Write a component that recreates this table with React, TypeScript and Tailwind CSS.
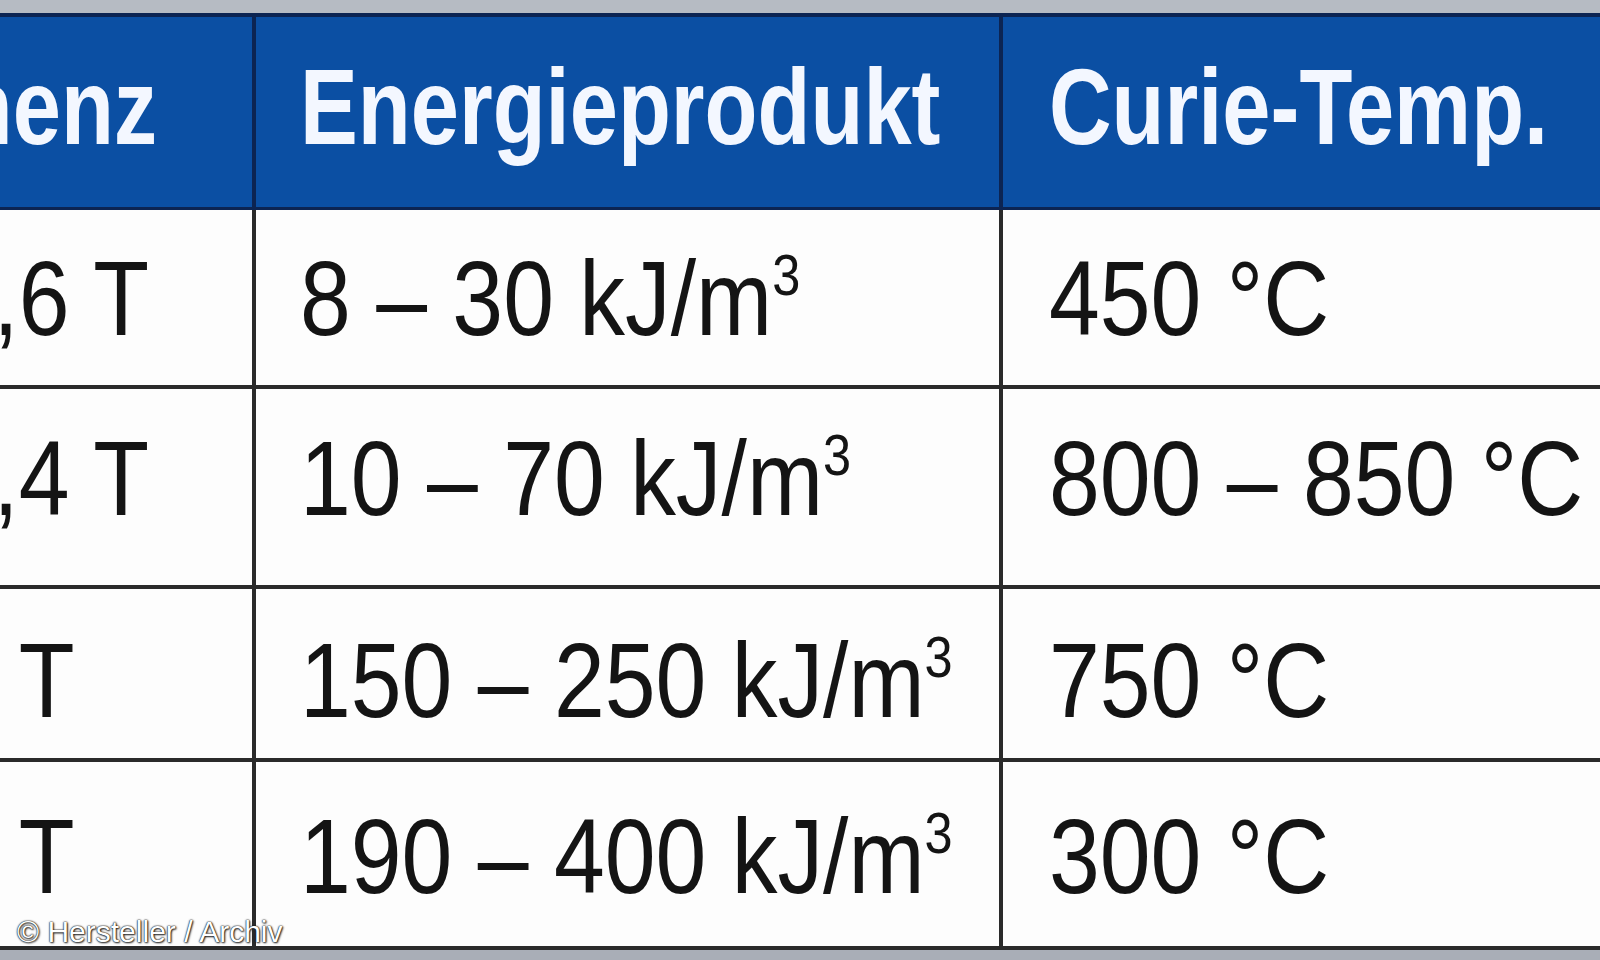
const rows = [
  {
    rem: "0,2 – 0,6 T",
    remPad: "pr-[103px]",
    energy: "8 – 30 kJ/m",
    curie: "450 °C",
    h: "h-[179px]",
    pt: "pt-[36px]",
  },
  {
    rem: "0,6 – 1,4 T",
    remPad: "pr-[103px]",
    energy: "10 – 70 kJ/m",
    curie: "800 – 850 °C",
    h: "h-[200px]",
    pt: "pt-[37px]",
  },
  {
    rem: "0,8 – 1,15 T",
    remPad: "pr-[178px]",
    energy: "150 – 250 kJ/m",
    curie: "750 °C",
    h: "h-[173px]",
    pt: "pt-[39px]",
  },
  {
    rem: "1,0 – 1,45 T",
    remPad: "pr-[178px]",
    energy: "190 – 400 kJ/m",
    curie: "300 °C",
    h: "h-[188px]",
    pt: "pt-[42px]",
  },
];

function Cube() {
  return <span className="inline-block align-top text-[58px] leading-none">3</span>;
}

export default function App() {
  return (
    <div className="relative w-[1600px] h-[960px] overflow-hidden bg-[#a9aeb7] font-['Liberation_Sans',Arial,sans-serif]">
      <div className="h-[13px] bg-[#b6bbc3]" />

      {/* header */}
      <div className="grid grid-cols-[252px_747px_601px] h-[197px] border-t-4 border-b-[3px] border-[#0c2452] bg-[#0b4fa3] text-[#f3f7ff] font-bold text-[107px] leading-none whitespace-nowrap">
        <div className="flex justify-end overflow-hidden pt-[37px] pr-[95px]">
          <span className="inline-block origin-right scale-x-[0.81]">Remanenz</span>
        </div>
        <div className="border-l-4 border-[#0c2452] pt-[37px] pl-[44px]">
          <span className="inline-block origin-left scale-x-[0.81]">Energieprodukt</span>
        </div>
        <div className="border-l-4 border-[#0c2452] pt-[37px] pl-[46px]">
          <span className="inline-block origin-left scale-x-[0.81]">Curie-Temp.</span>
        </div>
      </div>

      {/* body */}
      <div className="bg-[#fdfdfd] text-[#141414] text-[105px] leading-none whitespace-nowrap">
        {rows.map((r) => (
          <div
            key={r.energy}
            className={`grid grid-cols-[252px_747px_601px] border-b-4 border-[#2a2a2a] ${r.h}`}
          >
            <div className={`flex justify-end overflow-hidden ${r.pt} ${r.remPad}`}>
              <span className="inline-block origin-right scale-x-[0.87]">{r.rem}</span>
            </div>
            <div className={`border-l-4 border-[#2a2a2a] pl-[44px] ${r.pt}`}>
              <span className="inline-block origin-left scale-x-[0.87]">
                {r.energy}
                <Cube />
              </span>
            </div>
            <div className={`border-l-4 border-[#2a2a2a] pl-[46px] ${r.pt}`}>
              <span className="inline-block origin-left scale-x-[0.87]">{r.curie}</span>
            </div>
          </div>
        ))}
      </div>

      <div className="absolute left-[17px] top-[917px] text-[30px] leading-none text-white whitespace-nowrap [text-shadow:0_0_1px_#000,0_0_2px_#1a1a1a,1px_1px_2px_#333]">
        © Hersteller / Archiv
      </div>
    </div>
  );
}
